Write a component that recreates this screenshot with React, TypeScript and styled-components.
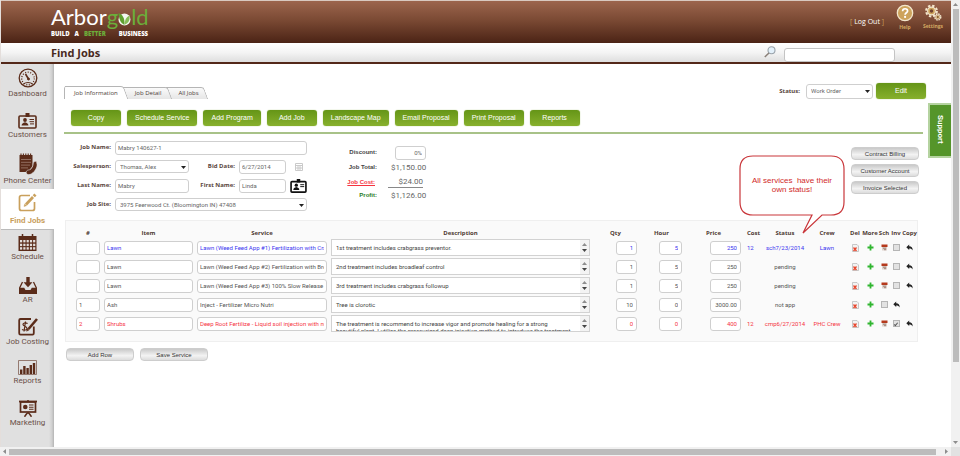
import React from "react";
import styled, { createGlobalStyle, css } from "styled-components";

const sans = '"Open Sans", "Noto Sans", sans-serif';
const text = 'Roboto, "Open Sans", sans-serif';
const arial = '"Liberation Sans", Arial, sans-serif';
const brown = "#5b2c1a";
const gold = "#c9a05c";

const Global = createGlobalStyle`
  *, *::before, *::after { box-sizing: border-box; }
  body { margin: 0; background: #fff; font-family: ${sans}; color: #555; }
  button, input, select, textarea { font: inherit; color: inherit; margin: 0; }
  svg { display: block; flex: none; }
`;

/* ---------- frame ---------- */
const Frame = styled.div`
  display: grid;
  grid-template-columns: minmax(0, 1fr) 9px;
  grid-template-rows: minmax(0, 1fr) 9px;
  min-height: 100vh;
`;
const Page = styled.div`
  position: relative;
  display: flex;
  flex-direction: column;
  border-left: 1px solid #e4dedb;
`;
const Bar = styled.div<{ $dir: "row" | "column" }>`
  display: flex;
  flex-direction: ${(p) => p.$dir};
  align-items: center;
  justify-content: space-between;
  background: #f1f1f1;
  padding: ${(p) => (p.$dir === "row" ? "0 2px" : "2px 0")};
`;
const Thumb = styled.div<{ $dir: "row" | "column" }>`
  flex: 1;
  background: #bcbcbc;
  ${(p) =>
    p.$dir === "row"
      ? css`height: 6px; margin: 0 8px 0 2px;`
      : css`width: 6px; margin: 2px 0 78px;`}
`;
const Corner = styled.div`
  background: #e2e2e2;
`;
const Tri = ({ d, fill = "#8d8d8d" }: { d: "up" | "down" | "left" | "right"; fill?: string }) => {
  const pts = { up: "0,4 2.5,1 5,4", down: "0,1 2.5,4 5,1", left: "4,0 1,2.5 4,5", right: "1,0 4,2.5 1,5" }[d];
  return (
    <svg width="5" height="5" viewBox="0 0 5 5" aria-hidden="true">
      <polygon points={pts} fill={fill} />
    </svg>
  );
};

/* ---------- header ---------- */
const Header = styled.header`
  display: flex;
  align-items: flex-start;
  height: 43px;
  padding: 0 4px 0 50px;
  border-top: 1px solid #d9c9c0;
  background: linear-gradient(#9c654d, #7b4a34 45%, #4b2315);
`;
const Brand = styled.a`
  display: flex;
  flex-direction: column;
  margin-top: 2px;
  text-decoration: none;
  color: #fff;
`;
const BrandName = styled.span`
  display: flex;
  align-items: center;
  font: 22px/27px Lato, sans-serif;
  svg { margin-top: 5px; }
`;
const Green = styled.span`
  color: #6cae3a;
`;
const Tagline = styled.span`
  display: flex;
  gap: 5px;
  font: 800 6px/8px "Open Sans", sans-serif;
`;
const LastWord = styled.span`
  margin-left: 8px;
`;
const HeadLinks = styled.nav`
  display: flex;
  align-items: flex-start;
  margin-left: auto;
  color: ${gold};
`;
const LogOut = styled.a`
  margin: 15px 7px 0 0;
  font: 7px/11px ${sans};
  color: ${gold};
  text-decoration: none;
  span { color: #fff; }
`;
const HeadLink = styled.a`
  display: flex;
  flex-direction: column;
  align-items: center;
  width: 28px;
  padding-top: 3px;
  color: #d2a962;
  text-decoration: none;
  font: 700 5px/8px ${sans};
  svg { margin-bottom: 1px; }
`;
const TitleBar = styled.div`
  display: flex;
  align-items: center;
  height: 21px;
  padding: 0 56px 0 50px;
  border-bottom: 2px solid #532819;
  background: linear-gradient(#fff, #f4f4f4 50%, #dedede);
`;
const Title = styled.h1`
  margin: 0;
  flex: 1;
  font: 700 11px/18px "Noto Sans", sans-serif;
  color: #4a2a1e;
`;
const SearchBox = styled.input`
  width: 111px;
  height: 14px;
  margin: 4px 0 0 8px;
  border: 1px solid #c4c4c4;
  border-radius: 3px;
  background: #fff;
  font-size: 8px;
`;

/* ---------- sidebar ---------- */
const Body = styled.div`
  display: flex;
  flex: 1;
`;
const Side = styled.nav`
  width: 53px;
  flex: none;
  background: linear-gradient(to right, #e0e0e0 48px, #cfcfcf 51px, #b4b4b4);
`;
const SideItem = styled.a<{ $h: number; $active?: boolean }>`
  display: flex;
  flex-direction: column;
  align-items: center;
  justify-content: flex-end;
  height: ${(p) => p.$h}px;
  font: 8px/12px ${text};
  color: #6b514a;
  text-decoration: none;
  white-space: nowrap;
  svg { color: ${brown}; }
  ${(p) =>
    p.$active &&
    css`
      margin-top: 2px;
      padding-bottom: 2px;
      background: #fff;
      color: ${gold};
      font-weight: 700;
      border-bottom: 1px solid #bbb;
      svg { color: ${gold}; margin-bottom: 3px; }
    `}
`;

const dims: Record<string, [number, number]> = {
  dash: [20, 20], card: [19, 16], phone: [19, 22], edit: [19, 19], cal: [19, 17],
  ar: [18, 17], cost: [20, 19], chart: [19, 15], board: [18, 17],
};
const Glyph = ({ name }: { name: string }) => {
  const [w, h] = dims[name];
  const shapes: Record<string, React.ReactNode> = {
    dash: (
      <g fill="none" stroke="currentColor">
        <circle cx="10" cy="10" r="8.8" strokeWidth="1.3" />
        <circle cx="10" cy="10.5" r="6.3" strokeWidth="1.3" strokeDasharray="1 1.6" />
        <path d="M4.5 16.5q5.5-4 11 0" strokeWidth="1" />
        <path d="M7.5 6l3 5" strokeWidth="1.6" />
        <circle cx="10.5" cy="11" r="1" fill="currentColor" />
      </g>
    ),
    card: (
      <g>
        <path d="M7.5 0h4v4h-4z" fill="currentColor" />
        <rect x="1" y="3" width="17" height="12" rx="1" fill="none" stroke="currentColor" strokeWidth="1.6" />
        <circle cx="7" cy="7" r="1.9" fill="currentColor" />
        <path d="M3.6 12.6c0-2 1.4-2.7 3.4-3.4 2 .7 3.4 1.4 3.4 3.4z" fill="currentColor" />
        <path d="M11.5 6.5h4.5M11.5 8.7h4.5M12 10.9h4" stroke="currentColor" strokeWidth="1" />
      </g>
    ),
    phone: (
      <g>
        <path d="M1.5 2h13v11l-4 6h-9z" fill="currentColor" />
        <path d="M3 .5v3M5.4.5v3M7.8.5v3M10.2.5v3M12.6.5v3" stroke="currentColor" strokeWidth="1.1" />
        <path d="M3 6.5h10M3 9.3h10M3 12.1h9M3 14.9h7" stroke="#b79a8e" strokeWidth=".6" />
        <path d="M18.5 8.5c-2.2-.6-3.4.6-3.4 3 0 1.4-1.8 4.8-3.3 5.2-2.3.5-3.3.7-3.6 2.2-.3 1.3.7 2.6 2.3 2.7 4.2.2 8.4-5.6 8.6-9.7z" fill="currentColor" stroke="#e0e0e0" strokeWidth=".6" />
      </g>
    ),
    edit: (
      <g fill="none" stroke="currentColor">
        <path d="M12 2.5H3.5q-2 0-2 2v11q0 2 2 2h11q2 0 2-2V9" strokeWidth="1.7" />
        <path d="M8 11.5l7-7.5" strokeWidth="2.8" />
        <path d="M15.8 3.2l1.6-1.7" strokeWidth="3" />
        <path d="M6 13.5l.7-2.6 1.9 1.8z" fill="currentColor" strokeWidth=".4" />
      </g>
    ),
    cal: (
      <g>
        <path d="M4.5 0v4M14.5 0v4" stroke="currentColor" strokeWidth="1.5" />
        <path d="M.5 2h18v15H.5z" fill="currentColor" />
        <g fill="#e3dedb">
          {[6, 9.7, 13.2].map((y) => [2, 5.3, 8.6, 11.9, 15.1].map((x) => <rect key={x + "-" + y} x={x} y={y} width="2.2" height="2.4" />))}
        </g>
      </g>
    ),
    ar: (
      <g>
        <path d="M3.5 5L.6 11v5.5h16.8V11l-2.9-6" fill="none" stroke="currentColor" strokeWidth="1.3" />
        <path d="M.6 10.8h4.6l1.3 2.2h5l1.3-2.2h4.6v5.7H.6z" fill="currentColor" />
        <path d="M7.3 0h3.4v5.3h2.8L9 10.3 4.5 5.3h2.8z" fill="currentColor" />
      </g>
    ),
    cost: (
      <g fill="none" stroke="currentColor">
        <path d="M13 2H2.5q-1.3 0-1.3 1.3v13q0 1.3 1.3 1.3h12q1.3 0 1.3-1.3V9.5" strokeWidth="1.8" />
        <path d="M19 2l-8.5 10" strokeWidth="2.6" />
        <path d="M8.6 14.2l.8-2.8 1.7 1.5z" fill="currentColor" strokeWidth=".5" />
        <path d="M9.6 6.5C7 5.2 4.7 6 5 7.7c.3 1.8 4 1.5 4 3.7 0 1.6-2.6 2.3-5 1.1M7.5 4.5L6 14.5" strokeWidth="1.2" />
      </g>
    ),
    chart: (
      <g>
        <rect x=".6" y=".6" width="17.8" height="13.8" fill="none" stroke="currentColor" strokeWidth=".8" opacity=".7" />
        <path d="M2 9.5h2.4V14H2zM5.2 6h2.4v8H5.2zM8.4 8h2.4v6H8.4zM11.6 5h2.4v9h-2.4zM14.8 3h2.4v11h-2.4z" fill="currentColor" />
      </g>
    ),
    board: (
      <g>
        <path d="M0 1.5h18" stroke="currentColor" strokeWidth="1.8" />
        <path d="M9 0v2M9 12v2M5.5 16.8L8 13.3M12.5 16.8L10 13.3" stroke="currentColor" strokeWidth="1.5" />
        <rect x="1.5" y="2" width="15" height="10" fill="none" stroke="currentColor" strokeWidth="1.7" />
        <circle cx="6.3" cy="7" r="2.3" fill="currentColor" />
        <path d="M10 5h4.5M10 7.2h4.5M10 9.3h4.5" stroke="currentColor" strokeWidth="1.1" />
      </g>
    ),
  };
  return (
    <svg width={w} height={h} viewBox={`0 0 ${w} ${h}`} aria-hidden="true">
      {shapes[name]}
    </svg>
  );
};

/* ---------- main ---------- */
const Main = styled.main`
  position: relative;
  flex: 1;
  min-width: 0;
  padding: 18px 25px 40px 10px;
`;
const TabRow = styled.div`
  display: flex;
  align-items: flex-end;
  height: 17px;
`;
const Tab = styled.button<{ $first?: boolean; $z: number }>`
  position: relative;
  z-index: ${(p) => p.$z};
  height: ${(p) => (p.$first ? 13 : 12)}px;
  padding: 0 11px 0 ${(p) => (p.$first ? 9 : 6)}px;
  border: 0;
  border-left: ${(p) => (p.$first ? "1px solid #b5b5b5" : "0")};
  border-top-left-radius: 3px;
  background: none;
  font: 6px/12px ${sans};
  color: #4d3d38;
  white-space: nowrap;
  isolation: isolate;
  &::before {
    content: "";
    position: absolute;
    z-index: -1;
    inset: 0 3px 0 ${(p) => (p.$first ? "2px" : "-4px")};
    border: 1px solid #b5b5b5;
    border-width: 1px 1px 0 0;
    border-top-right-radius: 3px;
    background: ${(p) => (p.$first ? "#fff" : "linear-gradient(#fafafa, #e6e6e6)")};
    transform: skewX(20deg);
  }
`;
const StatusBox = styled.div`
  display: flex;
  align-items: center;
  gap: 3px;
  margin-left: auto;
`;
const Label = styled.label`
  font: 700 6px/9px ${sans};
  color: #5a4640;
  text-align: right;
  white-space: nowrap;
`;
const StatusLabel = styled(Label)`
  margin-right: 3px;
`;
const GreenButton = styled.button`
  min-width: 50px;
  height: 16px;
  padding: 0 8px;
  border: 0;
  border-radius: 3px;
  background: linear-gradient(#659517, #87b02d);
  box-shadow: 0 0 1px #86ad3c;
  font: 7px/16px ${arial};
  color: #fff;
  white-space: nowrap;
`;
const Toolbar = styled.div`
  display: flex;
  gap: 6px;
  margin: 11px 3px 0 0;
  padding: 0 0 6px 7px;
  border-bottom: 2px solid #a8c288;
`;
const field = css`
  display: block;
  width: 100%;
  min-width: 0;
  border: 1px solid #cfcfcf;
  border-radius: 3px;
  background: #fff;
  font: 6px/10px ${text};
  color: #666;
  outline: 0;
`;
const Field = styled.input<{ $tone?: string; $right?: boolean }>`
  ${field}
  height: 14px;
  padding: 0 2px;
  ${(p) => p.$tone && css`color: ${p.$tone};`}
  ${(p) => p.$right && css`text-align: right;`}
`;
const SelectWrap = styled.span<{ $w?: number }>`
  position: relative;
  display: block;
  ${(p) => p.$w && css`width: ${p.$w}px;`}
  svg { position: absolute; right: 3px; top: 5px; pointer-events: none; }
`;
const Select = styled.select<{ $h?: number }>`
  ${field}
  height: ${(p) => p.$h ?? 13}px;
  padding: 0 12px 0 4px;
  appearance: none;
`;
const Upper = styled.section`
  display: flex;
  align-items: flex-start;
  padding: 4px 7px 6px 0;
`;
const Form = styled.div`
  display: grid;
  grid-template-columns: 47px 74px 42px 47px 17px;
  grid-auto-rows: 19px;
  column-gap: 4px;
  align-items: center;
`;
const Wide = styled.div`
  grid-column: 2 / -1;
`;
const Totals = styled.dl`
  display: grid;
  grid-template-columns: 60px 35px;
  grid-template-rows: 15px 15px 15px 11px;
  column-gap: 14px;
  align-items: center;
  margin: 7px 0 0 10px;
`;
const Term = styled.dt<{ $color?: string }>`
  text-align: right;
  font: 700 6px/9px ${arial};
  color: ${(p) => p.$color ?? "#444"};
  a { color: inherit; margin-right: 2px; }
  label { font: inherit; color: inherit; }
`;
const Amount = styled.dd<{ $sum?: boolean }>`
  margin: 0;
  font: 8px/10px ${text};
  text-align: right;
  color: #666;
  ${(p) => p.$sum && css`margin: 0 3px 0 -3px; border-bottom: 1px solid #888;`}
`;
const GrayButton = styled.button`
  width: 68px;
  height: 13px;
  padding: 0;
  border: 1px solid #cdcdcd;
  border-radius: 4px;
  background: linear-gradient(#c9c9c9, #f3f3f3 60%, #dcdcdc);
  font: 6px/10px ${arial};
  color: #333;
`;
const Stack = styled.div`
  display: flex;
  flex-direction: column;
  gap: 4px;
  margin: 9px 0 0 auto;
`;
const ButtonRow = styled.div`
  display: flex;
  gap: 6px;
  margin: 6px 0 0 2px;
`;
const Panel = styled.section`
  margin: 0 8px 0 1px;
  padding: 7px 0 8px 8px;
  border: 1px solid #efefef;
  background: #fafafa;
`;
const Table = styled.table`
  width: 100%;
  table-layout: fixed;
  border-collapse: collapse;
`;
const Th = styled.th`
  height: 10px;
  padding: 0;
  font: 700 6px/10px ${sans};
  color: #4f3a34;
  white-space: nowrap;
`;
const Row = styled.tr<{ $tone: string }>`
  height: 19px;
  color: ${(p) => p.$tone};
`;
const Td = styled.td<{ $align?: string }>`
  height: 19px;
  padding: 0 2px;
  font: 6px/10px ${text};
  text-align: ${(p) => p.$align ?? "center"};
  white-space: nowrap;
  vertical-align: middle;
`;
const CostTd = styled(Td)`
  padding: 0 2px 0 4px;
  text-align: left;
`;
const TextTd = styled(Td)`
  padding: 0;
`;
const NumField = styled(Field)<{ $w: number }>`
  width: ${(p) => p.$w}px;
  margin-left: auto;
  padding-right: 3px;
`;
const IconTd = styled.td`
  padding: 0;
  vertical-align: middle;
`;
const IconButton = styled.button`
  display: flex;
  align-items: center;
  justify-content: center;
  width: 8px;
  height: 9px;
  margin: 0 auto;
  padding: 0;
  border: 0;
  background: none;
`;
const Note = styled.div`
  display: flex;
  height: 17px;
  border: 1px solid #d2d2d2;
  background: #fff;
`;
const NoteText = styled.textarea`
  flex: 1;
  min-width: 0;
  height: 15px;
  padding: 4px 4px 0;
  border: 0;
  outline: 0;
  resize: none;
  overflow: hidden;
  background: transparent;
  font: 6px/7px ${text};
  color: #444;
`;
const NoteBar = styled.span`
  display: flex;
  flex-direction: column;
  align-items: center;
  justify-content: space-between;
  width: 9px;
  padding: 2px 0;
  background: #f3f3f3;
`;
const Check = styled.input`
  display: flex;
  align-items: center;
  justify-content: center;
  width: 7px;
  height: 7px;
  margin: 0 auto;
  border: 1px solid #b5b5b5;
  background: #e2e2e2;
  appearance: none;
  &:checked::after {
    content: "";
    width: 2px;
    height: 4px;
    border: solid #555;
    border-width: 0 1px 1px 0;
    transform: rotate(40deg);
  }
`;
const Callout = styled.aside`
  position: absolute;
  top: 91px;
  right: 106px;
  width: 106px;
  height: 80px;
  z-index: 4;
  svg { position: absolute; inset: 0; }
  p {
    position: relative;
    margin: 21px 0 0;
    text-align: center;
    white-space: pre;
    font: 8px/9px ${arial};
    color: #d12a2a;
  }
`;
const Support = styled.button`
  position: absolute;
  top: 39px;
  right: 0;
  width: 23px;
  height: 55px;
  padding: 0 0 2px;
  border: 2px solid #b5d3a0;
  border-right: 0;
  background: #55952a;
  color: #fff;
  font: 700 8px/17px ${text};
  writing-mode: vertical-rl;
`;

const DelIcon = () => (
  <svg width="7" height="8" viewBox="0 0 7 8" aria-hidden="true">
    <path d="M.5.5h4.5l1.5 1.5v5.5h-6z" fill="#f2f2f2" stroke="#b5b5b5" strokeWidth=".7" />
    <path d="M1.5 3.5l3 3.500M4.500 3.500l-3 3.500" stroke="#e8452c" strokeWidth="1.3" />
  </svg>
);
const PlusIcon = () => (
  <svg width="7" height="7" viewBox="0 0 7 7" aria-hidden="true">
    <path d="M3.5.5v6M.5 3.500h6" stroke="#2fb52f" strokeWidth="1.8" />
  </svg>
);
const SchIcon = () => (
  <svg width="7" height="7" viewBox="0 0 7 7" aria-hidden="true">
    <rect x=".5" y=".5" width="6" height="2.5" fill="#b5391c" />
    <rect x="1" y="3" width="5" height="3.5" fill="#ddd2cc" />
    <path d="M2 4.200h3M3 5.700h2" stroke="#8d6a5e" strokeWidth=".8" />
  </svg>
);
const CopyIcon = () => (
  <svg width="7" height="7" viewBox="0 0 7 7" aria-hidden="true">
    <path d="M3.200.5v1.700c2.200 0 3.500 1.300 3.500 4.300C5.800 5 4.800 4.600 3.200 4.600v1.500L.3 3.300z" fill="#222" />
  </svg>
);

const items: [string, string, number][] = [
  ["dash", "Dashboard", 36], ["card", "Customers", 41], ["phone", "Phone Center", 46],
  ["edit", "Find Jobs", 41], ["cal", "Schedule", 33], ["ar", "AR", 43],
  ["cost", "Job Costing", 42], ["chart", "Reports", 39], ["board", "Marketing", 42],
];
const actions = ["Copy", "Schedule Service", "Add Program", "Add Job", "Landscape Map", "Email Proposal", "Print Proposal", "Reports"];
const blue = "#3a35f0";
const red = "#f5333f";
const gray = "#555";
const rows = [
  { n: "", item: "Lawn", svc: "Lawn (Weed Feed App #1) Fertilization with Crabgrass", desc: "1st treatment includes crabgrass preventor.", q: "1", h: "5", p: "250", cost: "12", st: "sch7/23/2014", crew: "Lawn", tone: blue },
  { n: "", item: "Lawn", svc: "Lawn (Weed Feed App #2) Fertilization with Broadleaf", desc: "2nd treatment includes broadleaf control", q: "1", h: "5", p: "250", cost: "", st: "pending", crew: "", tone: gray },
  { n: "", item: "Lawn", svc: "Lawn (Weed Feed App #3) 100% Slow Release Fertilizer", desc: "3rd treatment includes crabgrass followup", q: "1", h: "5", p: "250", cost: "", st: "pending", crew: "", tone: gray },
  { n: "1", item: "Ash", svc: "Inject - Fertilizer Micro Nutri", desc: "Tree is clorotic", q: "10", h: "0", p: "3000.00", cost: "", st: "not app", crew: "", tone: gray },
  { n: "2", item: "Shrubs", svc: "Deep Root Fertilize - Liquid soil injection with nutrients", desc: "The treatment is recommend to increase vigor and promote healing for a strong\nbeautiful plant. I utilize the pressurized deep injection method to introduce the treatment", q: "0", h: "0", p: "400", cost: "12", st: "cmp6/27/2014", crew: "PHC Crew", tone: red },
];
const cols = [28, 93, 134, 0, 47, 45, 59, 21, 42, 42, 14, 16, 12, 12, 15];
const heads = ["#", "Item", "Service", "Description", "Qty", "Hour", "Price", "Cost", "Status", "Crew", "Del", "More", "Sch", "Inv", "Copy"];

export default function App() {
  return (
    <Frame>
      <Global />
      <Page>
        <Header>
          <Brand href="#">
            <BrandName>
              Arbor
              <Green>g</Green>
              <svg width="13" height="14" viewBox="0 0 13 14" aria-hidden="true">
                <circle cx="6.5" cy="7.5" r="6" fill="#f4f7f0" />
                <path d="M6.500 13C2 11 1 6 .5 1c4 1.500 6.500 5 6 12z" fill="#5fa02f" />
                <path d="M7 12.500c-.5-4 1-7.500 4.500-9 .5 4-.5 7.500-4.500 9z" fill="#86bd58" />
              </svg>
              <Green>ld</Green>
            </BrandName>
            <Tagline>
              <span>BUILD</span>
              <span>A</span>
              <Green>BETTER</Green>
              <LastWord>BUSINESS</LastWord>
            </Tagline>
          </Brand>
          <HeadLinks>
            <LogOut href="#">
              [ <span>Log Out</span> ]
            </LogOut>
            <HeadLink href="#">
              <svg width="18" height="18" viewBox="0 0 18 18" aria-hidden="true">
                <circle cx="9" cy="9" r="7.7" fill="#cda35c" stroke="#f3e6cc" strokeWidth="1.3" />
                <path d="M6.600 7.200c0-3.200 5-3.200 5-.3 0 1.800-2.500 1.900-2.500 3.800" fill="none" stroke="#fff" strokeWidth="1.7" />
                <circle cx="9.1" cy="12.9" r="1.1" fill="#fff" />
              </svg>
              Help
            </HeadLink>
            <HeadLink href="#">
              <svg width="18" height="17" viewBox="0 0 18 17" aria-hidden="true">
                <g fill="none">
                  <circle cx="7.5" cy="7" r="5.4" stroke="#f3e6cc" strokeWidth="2" strokeDasharray="2.4 1.84" />
                  <circle cx="7.5" cy="7" r="3.9" fill="#cda35c" stroke="#f3e6cc" strokeWidth="1.2" />
                  <circle cx="7.5" cy="7" r="1.7" fill="#704230" />
                  <circle cx="13.8" cy="13" r="3" stroke="#f3e6cc" strokeWidth="1.4" strokeDasharray="1.6 .76" />
                  <circle cx="13.8" cy="13" r="2" fill="#cda35c" stroke="#f3e6cc" strokeWidth=".7" />
                  <circle cx="13.8" cy="13" r=".8" fill="#5b3020" />
                </g>
              </svg>
              Settings
            </HeadLink>
          </HeadLinks>
        </Header>
        <TitleBar>
          <Title>Find Jobs</Title>
          <svg width="12" height="14" viewBox="0 0 12 14" aria-hidden="true">
            <circle cx="7.5" cy="4.3" r="3.5" fill="#e3f0fa" stroke="#9aa3aa" strokeWidth="1.1" />
            <path d="M4.900 7L.8 11" stroke="#8a8078" strokeWidth="1.5" />
          </svg>
          <SearchBox type="text" aria-label="Search" />
        </TitleBar>
        <Body>
          <Side>
            {items.map(([icon, label, h]) => (
              <SideItem key={label} href="#" $h={h} $active={label === "Find Jobs"}>
                <Glyph name={icon} />
                {label}
              </SideItem>
            ))}
          </Side>
          <Main>
            <TabRow>
              <Tab $first $z={3}>Job Information</Tab>
              <Tab $z={2}>Job Detail</Tab>
              <Tab $z={1}>All Jobs</Tab>
              <StatusBox>
                <StatusLabel htmlFor="status">Status:</StatusLabel>
                <SelectWrap $w={67}>
                  <Select id="status" $h={15} defaultValue="Work Order">
                    <option>Work Order</option>
                  </Select>
                  <Tri d="down" fill="#222" />
                </SelectWrap>
                <GreenButton>Edit</GreenButton>
              </StatusBox>
            </TabRow>
            <Toolbar>
              {actions.map((a) => (
                <GreenButton key={a}>{a}</GreenButton>
              ))}
            </Toolbar>
            <Upper>
              <Form>
                <Label htmlFor="job">Job Name:</Label>
                <Wide>
                  <Field id="job" defaultValue="Mabry 140627-1" />
                </Wide>
                <Label htmlFor="sales">Salesperson:</Label>
                <SelectWrap>
                  <Select id="sales" defaultValue="Thomas, Alex">
                    <option>Thomas, Alex</option>
                  </Select>
                  <Tri d="down" fill="#222" />
                </SelectWrap>
                <Label htmlFor="bid">Bid Date:</Label>
                <Field id="bid" defaultValue="6/27/2014" />
                <IconButton aria-label="Pick date">
                  <svg width="8" height="9" viewBox="0 0 8 9" aria-hidden="true">
                    <path d="M.5 1.500h7v7h-7zM.5 3.500h7M3 4v4M5 4v4M1 6h6" fill="none" stroke="#c4c4c4" strokeWidth=".9" />
                  </svg>
                </IconButton>
                <Label htmlFor="last">Last Name:</Label>
                <Field id="last" defaultValue="Mabry" />
                <Label htmlFor="first">First Name:</Label>
                <Field id="first" defaultValue="Linda" />
                <svg width="17" height="14" viewBox="0 0 19 16" color="#111" aria-hidden="true">
                  <path d="M7.500 0h4v4h-4z" fill="currentColor" />
                  <rect x="1" y="3" width="17" height="12" rx="1" fill="none" stroke="currentColor" strokeWidth="1.9" />
                  <circle cx="7" cy="7" r="1.9" fill="currentColor" />
                  <path d="M3.600 12.600c0-2 1.400-2.700 3.400-3.400 2 .7 3.400 1.400 3.400 3.400z" fill="currentColor" />
                  <path d="M11.500 6.500H16M11.500 8.700H16" stroke="currentColor" strokeWidth="1.1" />
                </svg>
                <Label htmlFor="site">Job Site:</Label>
                <Wide>
                  <SelectWrap>
                    <Select id="site" defaultValue="3975 Feerwood Ct. (Bloomington IN) 47408">
                      <option>3975 Feerwood Ct. (Bloomington IN) 47408</option>
                    </Select>
                    <Tri d="down" fill="#222" />
                  </SelectWrap>
                </Wide>
              </Form>
              <Totals>
                <Term><label htmlFor="disc">Discount:</label></Term>
                <Amount><NumField id="disc" $w={31} $right defaultValue="0%" /></Amount>
                <Term>Job Total:</Term>
                <Amount>$1,150.00</Amount>
                <Term $color="#f5333f"><a href="#">Job Cost:</a></Term>
                <Amount $sum>$24.00</Amount>
                <Term $color="#2a7d2a">Profit:</Term>
                <Amount>$1,126.00</Amount>
              </Totals>
              <Stack>
                <GrayButton>Contract Billing</GrayButton>
                <GrayButton>Customer Account</GrayButton>
                <GrayButton>Invoice Selected</GrayButton>
              </Stack>
            </Upper>
            <Panel>
              <Table>
                <colgroup>
                  {cols.map((w, i) => (
                    <col key={i} width={w || undefined} />
                  ))}
                </colgroup>
                <thead>
                  <tr>
                    {heads.map((h) => (
                      <Th key={h}>{h}</Th>
                    ))}
                  </tr>
                </thead>
                <tbody>
                  {rows.map((r, i) => {
                    const check = <Check type="checkbox" aria-label="Invoice" defaultChecked={i === 4} />;
                    const copy = <IconButton aria-label="Copy"><CopyIcon /></IconButton>;
                    const unscheduled = r.st === "not app";
                    return (
                      <Row key={i} $tone={r.tone}>
                        <Td><Field aria-label="Number" $tone={r.tone} defaultValue={r.n} /></Td>
                        <Td><Field aria-label="Item" $tone={r.tone} defaultValue={r.item} /></Td>
                        <Td><Field aria-label="Service" $tone={r.tone} defaultValue={r.svc} /></Td>
                        <Td>
                          <Note>
                            <NoteText aria-label="Description" defaultValue={r.desc} />
                            <NoteBar><Tri d="up" /><Tri d="down" fill="#444" /></NoteBar>
                          </Note>
                        </Td>
                        <Td><NumField aria-label="Qty" $w={21} $right $tone={r.tone} defaultValue={r.q} /></Td>
                        <Td><NumField aria-label="Hour" $w={23} $right $tone={r.tone} defaultValue={r.h} /></Td>
                        <Td><NumField aria-label="Price" $w={31} $right $tone={r.tone} defaultValue={r.p} /></Td>
                        <CostTd>{r.cost}</CostTd>
                        <TextTd>{r.st}</TextTd>
                        <TextTd>{r.crew}</TextTd>
                        <IconTd><IconButton aria-label="Delete"><DelIcon /></IconButton></IconTd>
                        <IconTd><IconButton aria-label="More"><PlusIcon /></IconButton></IconTd>
                        <IconTd>{unscheduled ? check : <IconButton aria-label="Schedule"><SchIcon /></IconButton>}</IconTd>
                        <IconTd>{unscheduled ? copy : check}</IconTd>
                        <IconTd>{unscheduled ? null : copy}</IconTd>
                      </Row>
                    );
                  })}
                </tbody>
              </Table>
            </Panel>
            <ButtonRow>
              <GrayButton>Add Row</GrayButton>
              <GrayButton>Save Service</GrayButton>
            </ButtonRow>
            <Callout>
              <svg width="106" height="80" viewBox="0 0 106 80" aria-hidden="true">
                <path d="M14 1h78q13 0 13 13v33q0 13-13 13h-9L64 78l9-18H14Q1 60 1 47V14Q1 1 14 1z" fill="#fff" stroke="#c9363a" strokeWidth="1.2" />
              </svg>
              <p>{"All services  have their\nown status!"}</p>
            </Callout>
            <Support>Support</Support>
          </Main>
        </Body>
      </Page>
      <Bar $dir="column">
        <Tri d="up" />
        <Thumb $dir="column" />
        <Tri d="down" />
      </Bar>
      <Bar $dir="row">
        <Tri d="left" />
        <Thumb $dir="row" />
        <Tri d="right" />
      </Bar>
      <Corner />
    </Frame>
  );
}
